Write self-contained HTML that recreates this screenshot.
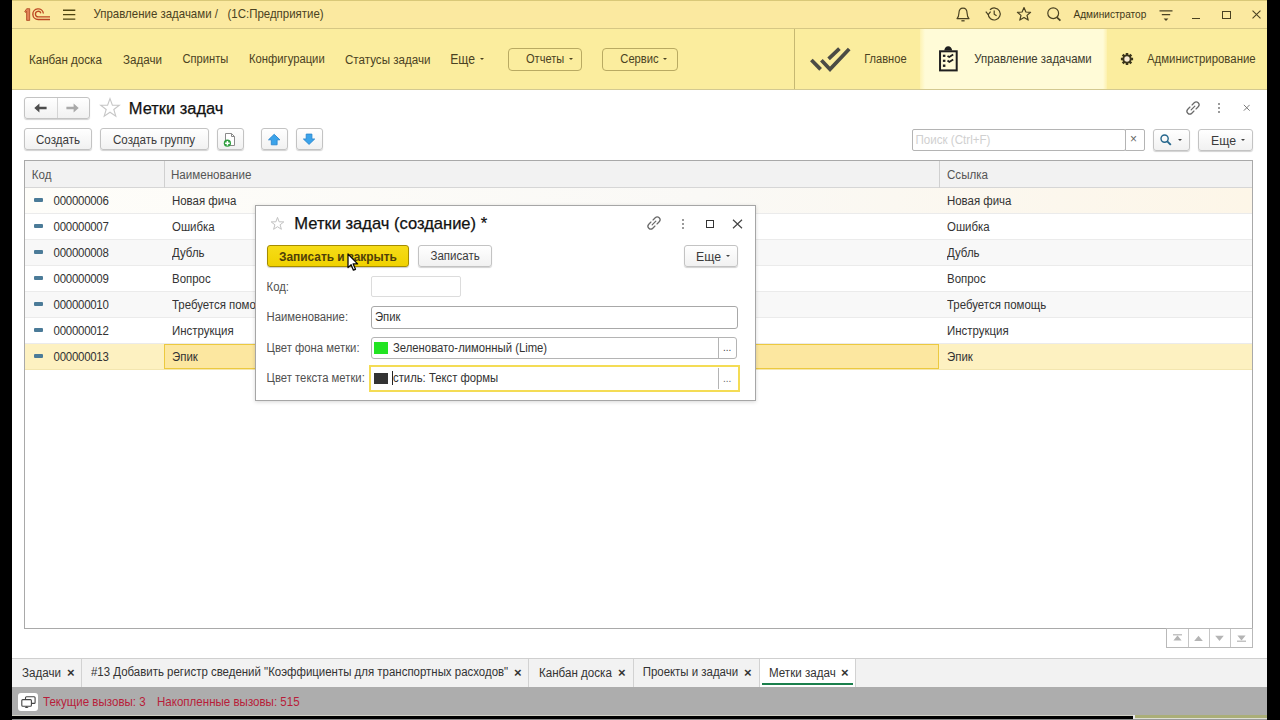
<!DOCTYPE html>
<html lang="ru">
<head>
<meta charset="utf-8">
<title>Метки задач</title>
<style>
*{box-sizing:border-box;margin:0;padding:0}
html,body{width:1280px;height:720px;overflow:hidden;background:#000}
body{font-family:"Liberation Sans",sans-serif;font-size:11.6px;color:#3a3a3a;position:relative}
.abs,.t{position:absolute;white-space:nowrap}
.t{line-height:1;transform-origin:0 84.6%}
.sec,.th,.td,.tab,.st,.lb,.fv,.sy{transform:scaleY(1.16)}
#apptitle{transform:scaleY(1.08)}
.bt{transform:scaleY(1.1)}
#app{position:absolute;left:12px;top:0;width:1255px;height:720px;background:#fff;overflow:hidden}
#titlebar{position:absolute;left:0;top:0;width:1255px;height:28px;background:#fbe9a0;border-top:1px solid #d9c878}
#tline{position:absolute;left:0;top:28px;width:1255px;height:1px;background:#d6c784}
#sections{position:absolute;left:0;top:29px;width:1255px;height:60px;background:#fbed9e}
#sline{position:absolute;left:0;top:89px;width:1255px;height:1px;background:#d3c991}
.btn{position:absolute;height:22px;border:1px solid #c3c3c3;border-radius:3px;background:linear-gradient(#ffffff,#f1f1f1);box-shadow:0 1px 1px rgba(0,0,0,.18);white-space:nowrap}
.ybtn{position:absolute;height:23px;border:1px solid #b9aa62;border-radius:4px;background:#fbed9e}

#sel-section{position:absolute;left:908px;top:29px;width:186.500px;height:60px;background:linear-gradient(90deg,#fdf2b3 0,#fffbd7 5px,#fffbd7 183px,#fdf2b3 186.500px)}
#secdiv{position:absolute;left:782px;top:29px;width:1px;height:60px;background:#c6b872}
.sec{top:54px;font-size:11.6px;color:#4a4222}
.caret{position:absolute;width:0;height:0;border-left:2.600px solid transparent;border-right:2.600px solid transparent;border-top:2.800px solid #4a4222;margin-left:0.400px}

.bt{font-size:11.6px;color:#3a3a3a}
.dot{width:2px;height:2px;background:#7a7a7a;border-radius:1px}

.th{font-size:11.6px;color:#555}
.td{font-size:11.45px;color:#333;margin-top:-0.5px}
.row{border-bottom:1px solid #ebebeb;background:#fff}
.alt{background:#f8f8f8}
.r0{background:linear-gradient(90deg,#fefdf9 0%,#faf9f6 55%,#fdf6e8 100%)}
.selrow{background:#fdf1c1;border-bottom:1px solid #f3e6b0}
#selcell{background:#fce7a0;border:1px solid #ecc93f}
.ric{width:9px;height:4px;border-radius:1px;background:#4b7b98}
.tdiv{top:659px;width:1px;height:28px;background:#d2d2d2}
.tab{top:667px;font-size:11.6px;color:#333}
.tx{top:666px;font-size:13px;color:#333;font-weight:bold}
.st{top:697px;font-size:11.55px;color:#b81d3a}

.lb{font-size:11.3px;color:#505050}
.fv{font-size:11.3px;color:#333}
</style>
</head>
<body>
<div id="app">
  <div id="titlebar"></div>
  <div id="tline"></div>
  <div id="sections"></div>
  <div id="sel-section"></div>
  <div id="sline"></div>
  <div id="secdiv"></div>

  <!-- title bar content -->
  <svg class="abs" id="logo" style="left:11px;top:7px" width="30" height="15" viewBox="0 0 30 15">
    <path d="M1.7 4.7 L3.7 1.7 H6.7 V13.4 H3.6 V4.4 L2.3 5.4 Z" fill="#e28258" stroke="#ab431e" stroke-width="0.8" stroke-linejoin="round"/>
    <path d="M20.4 6.5 A5.3 5.3 0 1 0 15.2 12.5 L27 12.5" fill="none" stroke="#bd4722" stroke-width="1.4"/>
    <path d="M17.9 6.2 A2.8 2.8 0 1 0 15.2 9.9 L27 9.9" fill="none" stroke="#bd4722" stroke-width="1.3"/>
  </svg>
  <svg class="abs" style="left:50px;top:9px" width="14" height="12" viewBox="0 0 14 12">
    <path d="M1 1.25H13.3M1 5.6H13.3M1 10.2H13.3" stroke="#4e4510" stroke-width="1.3" fill="none"/>
  </svg>
  <span class="t" id="apptitle" style="left:81.500px;top:9px;font-size:11.47px;color:#4a4222">Управление задачами /&nbsp;&nbsp; (1С:Предприятие)</span>

  <span class="t" id="admin" style="left:1061.5px;top:9.800px;font-size:10.1px;color:#3f3818">Администратор</span>

  <!-- sections panel -->
  <span class="t sec" style="left:17px">Канбан доска</span>
  <span class="t sec" style="left:111px">Задачи</span>
  <span class="t sec" style="left:170.500px;font-size:11.15px">Спринты</span>
  <span class="t sec" style="left:237px;font-size:11.25px">Конфигурации</span>
  <span class="t sec" style="left:333px">Статусы задачи</span>
  <span class="t sec" style="left:438.200px;font-size:12.2px">Еще</span>
  <span class="caret" style="left:468px;top:58px"></span>
  <div class="ybtn" style="left:496px;top:48px;width:74px"></div>
  <span class="t sec" style="left:514px;font-size:11.05px">Отчеты</span>
  <span class="caret" style="left:557px;top:58px"></span>
  <div class="ybtn" style="left:590px;top:48px;width:76px"></div>
  <span class="t sec" style="left:608.300px;font-size:11.2px">Сервис</span>
  <span class="caret" style="left:651px;top:58px"></span>

  <span class="t sec" style="left:852.200px;font-size:11.1px">Главное</span>
  <span class="t sec" style="left:962.300px;font-size:11.42px;color:#3c3a2c">Управление задачами</span>
  <span class="t sec" style="left:1135px;font-size:11.4px">Администрирование</span>

  <!-- form header -->
  <div class="btn" style="left:12px;top:97px;width:66px;height:22px"></div>
  <div class="abs" style="left:45px;top:98px;width:1px;height:20px;background:#d4d4d4"></div>
  <svg class="abs" style="left:22px;top:103px" width="13" height="10" viewBox="0 0 13 10"><path d="M0.3 5 L5.4 0.6 V3.7 H12.6 V6.3 H5.4 V9.4 Z" fill="#4d4d4d"/></svg>
  <svg class="abs" style="left:54px;top:103px" width="13" height="10" viewBox="0 0 13 10"><path d="M12.7 5 L7.6 0.6 V3.7 H0.4 V6.3 H7.6 V9.4 Z" fill="#a9a9a9"/></svg>
  <svg class="abs" style="left:87px;top:97px" width="22" height="21" viewBox="0 0 22 21"><path d="M11 1.6 L13.4 8.1 L20.3 8.3 L14.8 12.5 L16.8 19.1 L11 15.2 L5.2 19.1 L7.2 12.5 L1.7 8.3 L8.6 8.1 Z" fill="#fff" stroke="#c6c6c6" stroke-width="1.1" stroke-linejoin="miter"/></svg>
  <span class="t" id="h1" style="left:116.800px;top:100.400px;font-size:16.45px;color:#111;-webkit-text-stroke:0.25px #111">Метки задач</span>

  <!-- header right icons -->
  <svg class="abs" style="left:1171.5px;top:98.7px" width="18" height="18" viewBox="-9 -9 18 18"><g transform="rotate(-45) scale(1.13)" fill="none" stroke="#6a6a6a" stroke-width="1.1" stroke-linecap="round"><path d="M-1.300 -2.500 H-4 A2.500 2.500 0 0 0 -4 2.500 H-1.300"/><path d="M1.300 -2.500 H4 A2.500 2.500 0 0 1 4 2.500 H1.300"/><path d="M-2.300 0 H2.300"/></g></svg>
  <div class="abs dot" style="left:1206.200px;top:103px"></div>
  <div class="abs dot" style="left:1206.200px;top:107px"></div>
  <div class="abs dot" style="left:1206.200px;top:111px"></div>
  <svg class="abs" style="left:1230.500px;top:104px" width="7.500" height="7.500" viewBox="0 0 9 9"><path d="M1 1 L8 8 M8 1 L1 8" stroke="#7a7a7a" stroke-width="1.2"/></svg>

  <!-- command bar -->
  <div class="btn" style="left:12px;top:128px;width:68px"></div>
  <span class="t bt" style="left:24px;top:134px">Создать</span>
  <div class="btn" style="left:88px;top:128px;width:109px"></div>
  <span class="t bt" style="left:101px;top:134px">Создать группу</span>
  <div class="btn" style="left:205px;top:128px;width:27px"></div>
  <svg class="abs" style="left:210.300px;top:131.800px" width="16" height="16" viewBox="0 0 16 16">
    <path d="M3.5 1.5 H9.5 L12.5 4.5 V13.5 H3.5 Z" fill="#fff" stroke="#8a8a8a" stroke-width="1"/>
    <path d="M9.5 1.5 V4.5 H12.5" fill="none" stroke="#8a8a8a" stroke-width="1"/>
    <circle cx="5.4" cy="11.2" r="3.6" fill="#2e9e3e"/>
    <path d="M5.4 8.900 V13.500 M3.100 11.2 H7.700" stroke="#fff" stroke-width="1.500"/>
  </svg>
  <div class="btn" style="left:249px;top:128px;width:27px"></div>
  <svg class="abs" style="left:255px;top:132px" width="15" height="14" viewBox="0 0 15 14"><path d="M7.2 2.300 L12.900 7.800 H10.100 V12.800 H4.300 V7.800 H1.500 Z" fill="#3ba3ea" stroke="#2b88d0" stroke-width="0.9" stroke-linejoin="round"/></svg>
  <div class="btn" style="left:284px;top:128px;width:27px"></div>
  <svg class="abs" style="left:290px;top:132px" width="15" height="14" viewBox="0 0 15 14"><path d="M7.050 12.400 L12.700 7 H9.900 V2.100 H4.200 V7 H1.400 Z" fill="#3ba3ea" stroke="#2b88d0" stroke-width="0.9" stroke-linejoin="round"/></svg>

  <!-- search -->
  <div class="abs" id="search" style="left:900px;top:129px;width:214px;height:22px;border:1px solid #b4b4b4;border-radius:2px;background:#fff"></div>
  <span class="t sy" style="left:903.500px;top:134px;font-size:11.6px;color:#d0d0d0">Поиск (Ctrl+F)</span>
  <div class="abs" id="searchx" style="left:1113px;top:129px;width:20px;height:22px;border:1px solid #b4b4b4;border-radius:0 2px 2px 0;background:#fff"></div>
  <span class="t" style="left:1118px;top:133px;font-size:12px;color:#666">×</span>
  <div class="btn" style="left:1141px;top:129px;width:37px"></div>
  <svg class="abs" style="left:1147px;top:133px" width="14" height="14" viewBox="0 0 14 14"><circle cx="5.6" cy="5.600" r="3.600" fill="none" stroke="#24668c" stroke-width="1.400"/><path d="M8.300 8.300 L11.800 11.800" stroke="#24668c" stroke-width="1.900"/></svg>
  <span class="caret" style="left:1166px;top:139px;border-top-color:#444"></span>
  <div class="btn" style="left:1186px;top:129px;width:55px"></div>
  <span class="t bt" style="left:1199px;top:134.500px;font-size:12.3px">Еще</span>
  <span class="caret" style="left:1229px;top:139px;border-top-color:#444"></span>

  <!-- table -->
  <div class="abs" id="table" style="left:12px;top:160px;width:1229px;height:469px;border:1px solid #a9a9a9;background:#fff"></div>
  <div class="abs" id="thead" style="left:13px;top:161px;width:1227px;height:27px;background:#f2f2f2;border-bottom:1px solid #d6d6d6"></div>
  <div class="abs" style="left:152px;top:161px;width:1px;height:27px;background:#d0d0d0"></div>
  <div class="abs" style="left:927px;top:161px;width:1px;height:27px;background:#d0d0d0"></div>
  <span class="t th" style="left:19.7px;top:168.500px">Код</span>
  <span class="t th" style="left:159px;top:168.500px">Наименование</span>
  <span class="t th" style="left:935px;top:168.500px">Ссылка</span>
  <div class="abs row r0" style="left:13px;top:188px;width:1227px;height:26px"></div>
  <div class="abs ric" style="left:22px;top:198px"></div>
  <span class="t td" style="left:41.6px;top:196px;letter-spacing:-0.25px">000000006</span>
  <span class="t td" style="left:160px;top:196px">Новая фича</span>
  <span class="t td" style="left:935px;top:196px">Новая фича</span>
  <div class="abs row" style="left:13px;top:214px;width:1227px;height:26px"></div>
  <div class="abs ric" style="left:22px;top:224px"></div>
  <span class="t td" style="left:41.6px;top:222px;letter-spacing:-0.25px">000000007</span>
  <span class="t td" style="left:160px;top:222px">Ошибка</span>
  <span class="t td" style="left:935px;top:222px">Ошибка</span>
  <div class="abs row alt" style="left:13px;top:240px;width:1227px;height:26px"></div>
  <div class="abs ric" style="left:22px;top:250px"></div>
  <span class="t td" style="left:41.6px;top:248px;letter-spacing:-0.25px">000000008</span>
  <span class="t td" style="left:160px;top:248px">Дубль</span>
  <span class="t td" style="left:935px;top:248px">Дубль</span>
  <div class="abs row" style="left:13px;top:266px;width:1227px;height:26px"></div>
  <div class="abs ric" style="left:22px;top:276px"></div>
  <span class="t td" style="left:41.6px;top:274px;letter-spacing:-0.25px">000000009</span>
  <span class="t td" style="left:160px;top:274px">Вопрос</span>
  <span class="t td" style="left:935px;top:274px">Вопрос</span>
  <div class="abs row alt" style="left:13px;top:292px;width:1227px;height:26px"></div>
  <div class="abs ric" style="left:22px;top:302px"></div>
  <span class="t td" style="left:41.6px;top:300px;letter-spacing:-0.25px">000000010</span>
  <span class="t td" style="left:160px;top:300px">Требуется помощь</span>
  <span class="t td" style="left:935px;top:300px">Требуется помощь</span>
  <div class="abs row" style="left:13px;top:318px;width:1227px;height:26px"></div>
  <div class="abs ric" style="left:22px;top:328px"></div>
  <span class="t td" style="left:41.6px;top:326px;letter-spacing:-0.25px">000000012</span>
  <span class="t td" style="left:160px;top:326px">Инструкция</span>
  <span class="t td" style="left:935px;top:326px">Инструкция</span>
  <div class="abs row selrow" style="left:13px;top:344px;width:1227px;height:26px"></div>
  <div class="abs" id="selcell" style="left:152px;top:344px;width:775px;height:25px"></div>
  <div class="abs ric" style="left:22px;top:354px"></div>
  <span class="t td" style="left:41.6px;top:352px;letter-spacing:-0.25px">000000013</span>
  <span class="t td" style="left:160px;top:352px">Эпик</span>
  <span class="t td" style="left:935px;top:352px">Эпик</span>

  <!-- table nav buttons -->
  <div class="abs" style="left:1154px;top:628px;width:87px;height:20px;border:1px solid #b9b9b9;background:#fff"></div>
  <div class="abs" style="left:1176px;top:629px;width:1px;height:18px;background:#c6c6c6"></div>
  <div class="abs" style="left:1197px;top:629px;width:1px;height:18px;background:#c6c6c6"></div>
  <div class="abs" style="left:1218px;top:629px;width:1px;height:18px;background:#c6c6c6"></div>
  <svg class="abs" style="left:1160px;top:634px" width="11" height="8" viewBox="0 0 11 8"><path d="M1 0.8H10" stroke="#b4b4b4" stroke-width="1.2"/><path d="M5.5 1.6 L9.6 6.6 H1.4 Z" fill="#b4b4b4"/></svg>
  <svg class="abs" style="left:1181px;top:635px" width="11" height="7" viewBox="0 0 11 7"><path d="M5.5 0.8 L9.8 6 H1.2 Z" fill="#b4b4b4"/></svg>
  <svg class="abs" style="left:1202px;top:635px" width="11" height="7" viewBox="0 0 11 7"><path d="M5.5 6 L9.8 0.8 H1.2 Z" fill="#b4b4b4"/></svg>
  <svg class="abs" style="left:1224px;top:634px" width="11" height="8" viewBox="0 0 11 8"><path d="M1 7.2H10" stroke="#b4b4b4" stroke-width="1.2"/><path d="M5.5 6.4 L9.6 1.4 H1.4 Z" fill="#b4b4b4"/></svg>

  <!-- tabs -->
  <div class="abs" id="tabbar" style="left:0;top:658px;width:1255px;height:30px;background:#f2f2f2;border-top:1px solid #cfcfcf"></div>
  <div class="abs tdiv" style="left:69px"></div>
  <div class="abs tdiv" style="left:516px"></div>
  <div class="abs tdiv" style="left:621px"></div>
  <div class="abs tdiv" style="left:747px"></div>
  <div class="abs tdiv" style="left:843px"></div>
  <div class="abs" id="acttab" style="left:748px;top:659px;width:95px;height:28px;background:#fff"></div>
  <div class="abs" style="left:750px;top:683px;width:91px;height:2px;background:#1a7f4c"></div>
  <span class="t tab" style="left:10px">Задачи</span><span class="t tx" style="left:55px">×</span>
  <span class="t tab" style="left:79px;font-size:11.46px">#13 Добавить регистр сведений "Коэффициенты для транспортных расходов"</span><span class="t tx" style="left:502px">×</span>
  <span class="t tab" style="left:527px">Канбан доска</span><span class="t tx" style="left:606px">×</span>
  <span class="t tab" style="left:630.700px;font-size:11.45px">Проекты и задачи</span><span class="t tx" style="left:732px">×</span>
  <span class="t tab" style="left:757px">Метки задач</span><span class="t tx" style="left:829px">×</span>

  <!-- status bar -->
  <div class="abs" id="status" style="left:0;top:687px;width:1255px;height:28px;background:#adadad"></div>
  <div class="abs" style="left:0;top:715px;width:1255px;height:1px;background:#cfcfc4"></div>
  <div class="abs" style="left:0;top:716px;width:1121px;height:3px;background:#000"></div>
  <div class="abs" style="left:0;top:719px;width:1121px;height:1px;background:#8a8a8a"></div>
  <div class="abs" style="left:1121px;top:715px;width:134px;height:3px;background:#aaae78"></div>
  <div class="abs" style="left:1121px;top:718px;width:134px;height:1px;background:#deded6"></div>
  <div class="abs" style="left:1121px;top:719px;width:134px;height:1px;background:#9a9a9a"></div>
  <div class="abs" style="left:1121px;top:715px;width:1.500px;height:4px;background:#e8e8e8"></div>
  <div class="abs" style="left:6px;top:693px;width:20px;height:18px;background:#fff;border-radius:3px"></div>
  <svg class="abs" style="left:9px;top:696px" width="15" height="13" viewBox="0 0 15 13"><g fill="#fff" stroke="#444" stroke-width="1.1"><rect x="4.5" y="0.8" width="9.6" height="6.6" rx="1"/><rect x="0.8" y="3.6" width="9.6" height="6.6" rx="1"/></g><path d="M3.6 12 L5.6 10.2 L7.6 12 Z" fill="#444"/></svg>
  <span class="t st" style="left:31px">Текущие вызовы: 3</span>
  <span class="t st" style="left:145px">Накопленные вызовы: 515</span>

  <!-- dialog -->
  <div class="abs" id="dlg" style="left:243px;top:205px;width:501px;height:196px;background:#fff;border:1px solid #a6a6a6;box-shadow:0 1px 4px rgba(0,0,0,.16)"></div>
  <svg class="abs" style="left:258px;top:216px" width="15" height="15" viewBox="0 0 15 15"><path d="M7.5 1.4 L9.1 5.8 L13.8 5.9 L10.1 8.8 L11.4 13.3 L7.5 10.7 L3.6 13.3 L4.9 8.8 L1.2 5.9 L5.9 5.8 Z" fill="#fff" stroke="#c2c2c2" stroke-width="1"/></svg>
  <span class="t" id="dtitle" style="left:282.300px;top:216px;font-size:16.55px;color:#111;-webkit-text-stroke:0.25px #111">Метки задач (создание) *</span>
  <svg class="abs" style="left:633px;top:213.8px" width="18" height="18" viewBox="-9 -9 18 18"><g transform="rotate(-45) scale(1.13)" fill="none" stroke="#6a6a6a" stroke-width="1.1" stroke-linecap="round"><path d="M-1.300 -2.500 H-4 A2.500 2.500 0 0 0 -4 2.500 H-1.300"/><path d="M1.300 -2.500 H4 A2.500 2.500 0 0 1 4 2.500 H1.300"/><path d="M-2.300 0 H2.300"/></g></svg>
  <div class="abs dot" style="left:669.500px;top:219px"></div>
  <div class="abs dot" style="left:669.500px;top:223px"></div>
  <div class="abs dot" style="left:669.500px;top:227px"></div>
  <div class="abs" style="left:694px;top:220px;width:8px;height:8px;border:1.3px solid #333"></div>
  <svg class="abs" style="left:720px;top:219px" width="11" height="10" viewBox="0 0 11 10"><path d="M1 0.8 L10 9.2 M10 0.8 L1 9.2" stroke="#444" stroke-width="1.2"/></svg>

  <div class="abs" id="savebtn" style="left:255px;top:244.500px;width:142px;height:22px;border:1px solid #a58c00;border-radius:3px;background:linear-gradient(#f6dc18,#f0d200);box-shadow:0 1px 1px rgba(0,0,0,.2)"></div>
  <span class="t" style="left:267px;top:252px;font-size:11.9px;font-weight:bold;color:#4f3f08">Записать и закрыть</span>
  <div class="btn" style="left:406px;top:244.500px;width:74px"></div>
  <span class="t bt" style="left:418.500px;top:251px;font-size:11.5px">Записать</span>
  <div class="btn" style="left:672px;top:244.500px;width:54px"></div>
  <span class="t bt" style="left:684px;top:250.500px;font-size:12.3px">Еще</span>
  <span class="caret" style="left:714px;top:255px;border-top-color:#444"></span>

  <span class="t lb" style="left:254.600px;top:282px">Код:</span>
  <div class="abs" style="left:359px;top:276px;width:90px;height:21px;border:1px solid #dcdcdc;border-radius:2px;background:#fff"></div>
  <span class="t lb" style="left:254.600px;top:312px">Наименование:</span>
  <div class="abs" style="left:359px;top:306px;width:367px;height:23px;border:1px solid #a8a8a8;border-radius:3px;background:#fff"></div>
  <span class="t fv" style="left:363px;top:312px">Эпик</span>
  <span class="t lb" style="left:254.600px;top:342.500px">Цвет фона метки:</span>
  <div class="abs" style="left:359px;top:337px;width:366px;height:22px;border:1px solid #b4b4b4;border-radius:3px;background:#fff"></div>
  <div class="abs" style="left:706px;top:338px;width:1px;height:20px;background:#b4b4b4"></div>
  <div class="abs" style="left:362px;top:342px;width:14px;height:12px;background:#22e422"></div>
  <span class="t fv" style="left:381px;top:342.500px">Зеленовато-лимонный (Lime)</span>
  <span class="t" style="left:711px;top:343px;font-size:10px;color:#444">...</span>
  <span class="t lb" style="left:254.600px;top:373px">Цвет текста метки:</span>
  <div class="abs" style="left:357px;top:365px;width:371px;height:27px;border:2px solid #f4dc55;background:#fff"></div>
  <div class="abs" style="left:706px;top:368px;width:1px;height:21px;background:#b4b4b4"></div>
  <div class="abs" style="left:362px;top:373px;width:14px;height:11px;background:#333"></div>
  <div class="abs" style="left:380px;top:371px;width:1px;height:14px;background:#222"></div>
  <span class="t fv" style="left:381px;top:373px">стиль: Текст формы</span>
  <span class="t" style="left:711px;top:374px;font-size:10px;color:#666">...</span>

  <!-- mouse cursor -->
  <svg class="abs" style="left:335px;top:253px" width="12" height="19" viewBox="0 0 12 19"><path d="M1 1 V14.6 L4.1 11.7 L6.4 17.2 L8.5 16.3 L6.2 10.9 H10.6 Z" fill="#fff" stroke="#080808" stroke-width="1.3" stroke-linejoin="round"/></svg>

  <!-- title bar icons -->
  <svg class="abs" style="left:943px;top:6px" width="16" height="17" viewBox="0 0 16 17"><path d="M2 12.6 C3.6 11.2 3.8 9.4 3.9 7.2 C4 4.2 5.6 2.2 8 2.2 C10.4 2.2 12 4.2 12.1 7.2 C12.2 9.4 12.4 11.2 14 12.6 Z" fill="none" stroke="#4a4222" stroke-width="1.2" stroke-linejoin="round"/><path d="M6.4 14.8 H9.6" stroke="#4a4222" stroke-width="1.3"/></svg>
  <svg class="abs" style="left:973px;top:6px" width="17" height="16" viewBox="0 0 17 16"><path d="M3.2 8 A6 6 0 1 0 5 3.7" fill="none" stroke="#4a4222" stroke-width="1.2"/><path d="M0.8 5.6 L3.2 8.6 L5.6 5.6" fill="none" stroke="#4a4222" stroke-width="1.2"/><path d="M9.2 4.4 V8.2 L11.6 9.8" fill="none" stroke="#4a4222" stroke-width="1.2"/></svg>
  <svg class="abs" style="left:1004px;top:6px" width="16" height="16" viewBox="0 0 16 16"><path d="M8 1.6 L9.9 6 L14.6 6.3 L11 9.4 L12.2 14.1 L8 11.5 L3.8 14.1 L5 9.4 L1.4 6.3 L6.1 6 Z" fill="none" stroke="#4a4222" stroke-width="1.2" stroke-linejoin="round"/></svg>
  <svg class="abs" style="left:1034px;top:6px" width="16" height="16" viewBox="0 0 16 16"><circle cx="7.2" cy="7.2" r="5.4" fill="none" stroke="#4a4222" stroke-width="1.2"/><path d="M11 11.4 L14.4 14.6" stroke="#4a4222" stroke-width="1.7"/></svg>
  <svg class="abs" style="left:1147px;top:9.800px" width="14" height="12" viewBox="0 0 14 12"><path d="M0.5 0.9 H13.5 M2.8 4.6 H11.2" stroke="#4a4222" stroke-width="1.2"/><path d="M4.6 8.4 H9.4 L7 11 Z" fill="#4a4222"/></svg>
  <div class="abs" style="left:1180px;top:17.800px;width:8px;height:1.300px;background:#4a4222"></div>
  <div class="abs" style="left:1210.200px;top:10.700px;width:8.500px;height:8.500px;border:1.200px solid #4a4222"></div>
  <svg class="abs" style="left:1240.300px;top:10px" width="9" height="9" viewBox="0 0 10 10"><path d="M0.6 0.6 L9.4 9.4 M9.4 0.6 L0.6 9.4" stroke="#4a4222" stroke-width="1.2"/></svg>

  <!-- section icons -->
  <svg class="abs" style="left:797px;top:46px" width="44" height="28" viewBox="0 0 44 28"><g fill="none" stroke="#4b4b45" stroke-width="3.7" stroke-linejoin="miter"><path d="M2.4 14 L11.6 23.4"/><path d="M19.6 12.9 L30.4 2.6"/><path d="M12.4 14.3 L21 23.2 L40.2 2.9"/></g></svg>
  <svg class="abs" style="left:925px;top:46px" width="22" height="27" viewBox="0 0 22 27"><path d="M7.3 4.6 A3.9 4.4 0 0 1 15.1 4.600 Z" fill="#1f1f1f"/><rect x="3.050" y="5.300" width="16.650" height="19.100" fill="none" stroke="#1f1f1f" stroke-width="2"/><rect x="5.900" y="8.700" width="2.500" height="2.200" fill="#1f1f1f"/><rect x="5.900" y="13.700" width="2.500" height="2.200" fill="#1f1f1f"/><rect x="5.900" y="18.500" width="2.500" height="2.400" fill="#1f1f1f"/><path d="M10.500 9.900 L12.300 11 L16.200 8.500 M10.500 14.600 L12.300 15.900 L16.200 13.400" fill="none" stroke="#1f1f1f" stroke-width="1.800"/></svg>
  <svg class="abs" style="left:1108px;top:52px" width="14" height="14" viewBox="0 0 14 14"><g stroke="#3b351b" stroke-width="2.500"><path d="M7 0.900 V13.100 M0.900 7 H13.100 M2.700 2.700 L11.300 11.300 M11.300 2.700 L2.700 11.300"/></g><circle cx="7" cy="7" r="4.600" fill="#3b351b"/><circle cx="7" cy="7" r="2.700" fill="#f8ead2"/></svg>
</div>
</body>
</html>
